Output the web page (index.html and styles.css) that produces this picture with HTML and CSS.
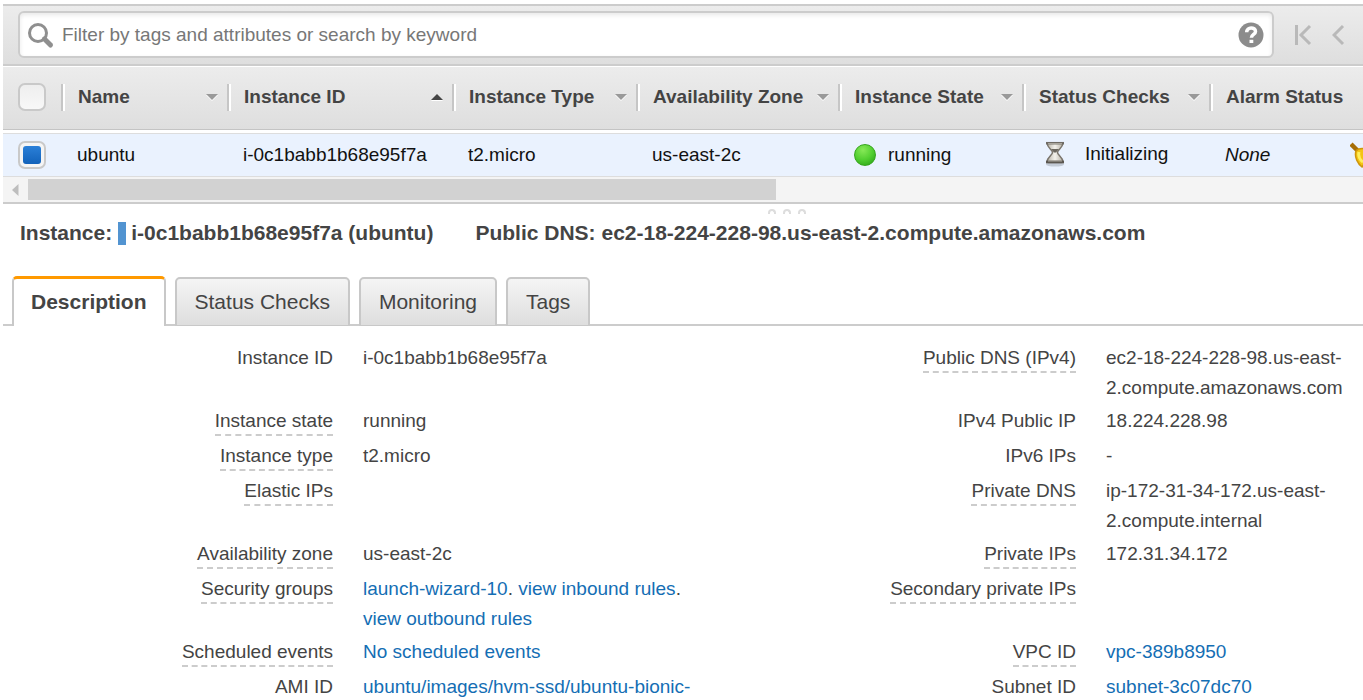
FILE: index.html
```html
<!DOCTYPE html>
<html lang="en">
<head>
<meta charset="utf-8">
<title>Instances</title>
<link rel="stylesheet" href="styles.css">
</head>
<body>
<main class="console">
  <div class="toolbar">
    <label class="search">
      <svg class="search-icon" width="28" height="28" viewBox="0 0 28 28" aria-hidden="true">
        <circle cx="10" cy="12" r="8.500" fill="none" stroke="#8f8f8f" stroke-width="3"/>
        <path d="M16.500 18L22.500 24" stroke="#8f8f8f" stroke-width="5" stroke-linecap="round"/>
      </svg>
      <input class="search-input" type="text" placeholder="Filter by tags and attributes or search by keyword" aria-label="Filter">
      <button class="icon-button" type="button" aria-label="Help">
        <svg width="26" height="26" viewBox="0 0 26 26" aria-hidden="true">
          <circle cx="13" cy="13" r="12.500" fill="#8c8c8c"/>
          <path d="M8.700 10.300C8.700 4.500 17.500 4.700 17.500 9.500C17.500 12.500 13.400 12.400 13.400 15.800" fill="none" stroke="#fff" stroke-width="3.500"/>
          <rect x="11.500" y="17.800" width="3.800" height="3.200" fill="#fff"/>
        </svg>
      </button>
    </label>
    <div class="pager">
      <button class="icon-button" type="button" aria-label="First page">
        <svg width="18" height="22" viewBox="0 0 18 22" aria-hidden="true"><path d="M2.500 1V21M16 2L7 11L16 20" fill="none" stroke="#b9b9b9" stroke-width="3"/></svg>
      </button>
      <button class="icon-button" type="button" aria-label="Previous page">
        <svg width="13" height="22" viewBox="0 0 13 22" aria-hidden="true"><path d="M11 2L2 11L11 20" fill="none" stroke="#b9b9b9" stroke-width="3"/></svg>
      </button>
    </div>
  </div>

  <table class="grid">
    <colgroup>
      <col class="col-check"><col class="col-name"><col class="col-id"><col class="col-type"><col class="col-zone"><col class="col-state"><col class="col-status"><col>
    </colgroup>
    <thead>
      <tr>
        <th class="check-cell"><input class="check" type="checkbox" aria-label="Select all instances"></th>
        <th><div class="head">Name<i class="arrow"></i></div></th>
        <th><div class="head">Instance ID<i class="arrow arrow-up"></i></div></th>
        <th><div class="head">Instance Type<i class="arrow"></i></div></th>
        <th><div class="head">Availability Zone<i class="arrow"></i></div></th>
        <th><div class="head">Instance State<i class="arrow"></i></div></th>
        <th><div class="head">Status Checks<i class="arrow"></i></div></th>
        <th><div class="head">Alarm Status</div></th>
      </tr>
    </thead>
    <tbody>
      <tr>
        <td class="check-cell"><input class="check" type="checkbox" checked aria-label="Select ubuntu"></td>
        <td>ubuntu</td>
        <td>i-0c1babb1b68e95f7a</td>
        <td>t2.micro</td>
        <td>us-east-2c</td>
        <td><div class="state"><span class="dot"></span>running</div></td>
        <td>
          <div class="status">
            <svg width="22" height="26" viewBox="0 0 22 26" aria-hidden="true">
              <defs>
                <linearGradient id="glass" x1="0" x2="1" y1="0" y2="0">
                  <stop offset="0" stop-color="#b5b0a5"/><stop offset=".5" stop-color="#f4f2ec"/><stop offset="1" stop-color="#b5b0a5"/>
                </linearGradient>
              </defs>
              <ellipse cx="11" cy="23.500" rx="9" ry="2" fill="#c3cbd6"/>
              <path d="M3 2H19C18.500 7.500 13.500 8.500 13.500 11.500C13.500 14 18.500 15.500 19 21H3C3.500 15.500 8.500 14 8.500 11.500C8.500 8.500 3.500 7.500 3 2Z" fill="url(#glass)" stroke="#7a756c" stroke-width="1.500"/>
              <path d="M7 8H15L12 11.500H10Z" fill="#6b675f"/>
              <path d="M2 2.200H20" stroke="#6f6b64" stroke-width="2.500"/>
              <path d="M2 21H20" stroke="#5b5750" stroke-width="2.800"/>
              <path d="M4 2.500H18M4 20H18" stroke="#a9a59c" stroke-width="1"/>
            </svg>
            Initializing
          </div>
        </td>
        <td>
          <div class="alarm">
            <em>None</em>
            <svg class="bell" width="26" height="26" viewBox="0 0 26 26" aria-hidden="true">
              <path d="M1 2L8 9" stroke="#a66e08" stroke-width="4.500"/>
              <path d="M6 9C9 5 17 6 23 10L12 25C8 22 4 15 6 9Z" fill="#f3c413" stroke="#cf960c" stroke-width="1.500"/>
              <path d="M9 10C8 14 10 18 13 20" fill="none" stroke="#ffef5c" stroke-width="3"/>
            </svg>
          </div>
        </td>
      </tr>
    </tbody>
  </table>

  <div class="scrollbar">
    <svg width="7" height="12" viewBox="0 0 7 12" aria-hidden="true"><path d="M6.500 0V12L0 6Z" fill="#bdbdbd"/></svg>
    <div class="track"><div class="thumb"></div></div>
  </div>

  <div class="splitter"><i></i><i></i><i></i></div>

  <h1 class="title">
    <span class="title-part">Instance:<i class="marker"></i>i-0c1babb1b68e95f7a (ubuntu)</span>
    <span>Public DNS: ec2-18-224-228-98.us-east-2.compute.amazonaws.com</span>
  </h1>

  <div class="tabs" role="tablist">
    <button class="tab tab-active" type="button" role="tab" aria-selected="true">Description</button>
    <button class="tab" type="button" role="tab" aria-selected="false">Status Checks</button>
    <button class="tab" type="button" role="tab" aria-selected="false">Monitoring</button>
    <button class="tab" type="button" role="tab" aria-selected="false">Tags</button>
  </div>

  <dl class="details">
    <dt>Instance ID</dt><dd>i-0c1babb1b68e95f7a</dd>
    <dt><span class="hint">Public DNS (IPv4)</span></dt><dd>ec2-18-224-228-98.us-east-2.compute.amazonaws.com</dd>

    <dt><span class="hint">Instance state</span></dt><dd>running</dd>
    <dt>IPv4 Public IP</dt><dd>18.224.228.98</dd>

    <dt><span class="hint">Instance type</span></dt><dd>t2.micro</dd>
    <dt>IPv6 IPs</dt><dd>-</dd>

    <dt><span class="hint">Elastic IPs</span></dt><dd></dd>
    <dt><span class="hint">Private DNS</span></dt><dd>ip-172-31-34-172.us-east-2.compute.internal</dd>

    <dt><span class="hint">Availability zone</span></dt><dd>us-east-2c</dd>
    <dt><span class="hint">Private IPs</span></dt><dd>172.31.34.172</dd>

    <dt><span class="hint">Security groups</span></dt><dd><a href="#">launch-wizard-10</a>. <a href="#">view inbound rules</a>. <a class="keep" href="#">view outbound rules</a></dd>
    <dt><span class="hint">Secondary private IPs</span></dt><dd></dd>

    <dt><span class="hint">Scheduled events</span></dt><dd><a href="#">No scheduled events</a></dd>
    <dt><span class="hint">VPC ID</span></dt><dd><a href="#">vpc-389b8950</a></dd>

    <dt>AMI ID</dt><dd><a href="#">ubuntu/images/hvm-ssd/ubuntu-bionic-</a></dd>
    <dt>Subnet ID</dt><dd><a href="#">subnet-3c07dc70</a></dd>
  </dl>
</main>
</body>
</html>
```
FILE: styles.css
```css
* { box-sizing: border-box; }

body {
  margin: 0;
  background: #fff;
  color: #444;
  font-family: "Liberation Sans", Arial, sans-serif;
  font-size: 19px;
}

.console {
  height: 100vh;
  padding: 4px 0 0 3px;
  overflow: hidden;
}

.icon-button {
  display: flex;
  padding: 0;
  border: 0;
  background: none;
}

/* Search bar */
.toolbar {
  display: flex;
  align-items: center;
  gap: 20px;
  padding: 5px 18px 6px 15px;
  border-top: 2px solid #ccc;
  border-bottom: 2px solid #ccc;
  background: linear-gradient(#ececec, #dedede);
}

.search {
  display: flex;
  flex: 1;
  align-items: center;
  gap: 6px;
  height: 47px;
  padding: 0 8px;
  border: 2px solid #ccc;
  border-radius: 6px;
  background: #fff;
  box-shadow: inset 0 2px 4px #e8e8e8;
}

.search-icon { flex: none; }

.search-input {
  flex: 1;
  min-width: 0;
  padding: 0;
  border: 0;
  outline: 0;
  background: none;
  font: inherit;
}

.search-input::placeholder { color: #777; }

.pager {
  display: flex;
  gap: 20px;
}

/* Instance table */
.grid {
  width: 100%;
  table-layout: fixed;
  border-spacing: 0;
  border-top: 1px solid #fff;
}

.col-check { width: 58px; }
.col-name { width: 166px; }
.col-id { width: 225px; }
.col-type { width: 184px; }
.col-zone { width: 202px; }
.col-state { width: 184px; }
.col-status { width: 187px; }

.grid thead { background: linear-gradient(#ececec, #dedede); }

.grid th {
  height: 63px;
  padding: 0 0 2px;
  border-bottom: 1px solid #c4c4c4;
  text-align: left;
  white-space: nowrap;
}

.head {
  display: flex;
  align-items: center;
  justify-content: space-between;
  height: 27px;
  padding: 0 9px 0 15px;
  border-left: 2px solid #c6c6c6;
  box-shadow: inset 2px 0 #fff;
}

.arrow {
  border: 6px solid transparent;
  border-top-color: #999;
  border-bottom: 0;
  filter: drop-shadow(0 1px #fff);
}

.arrow-up {
  border-top: 0;
  border-bottom: 6px solid #444;
}

.grid td {
  height: 47px;
  padding: 3px 0 0 16px;
  border-bottom: 1px solid #ddd;
  background: linear-gradient(#fff 3px, #ddd 3px, #ddd 4px, #eaf2fe 4px);
  color: #111;
  white-space: nowrap;
}

.grid .check-cell { padding-left: 15px; }

.check {
  display: block;
  width: 28px;
  height: 28px;
  margin: 0;
  appearance: none;
  border: 2px solid #c9c9c9;
  border-radius: 7px;
  background: linear-gradient(#eee, #f8f8f8);
}

.check:checked {
  padding: 3px;
  background: #f5f5f5;
}

.check:checked::before {
  display: block;
  width: 18px;
  height: 18px;
  border-radius: 3px;
  background: linear-gradient(#2b80d8, #1262ba);
  content: "";
}

.state {
  display: flex;
  align-items: center;
  gap: 12px;
}

.dot {
  width: 22px;
  height: 22px;
  border: 1px solid #35a51c;
  border-radius: 50%;
  background: radial-gradient(circle at 40% 25%, #87e957, #52cf31 50%, #249b12);
}

.status {
  display: flex;
  align-items: center;
  gap: 19px;
  padding: 0 0 2px 6px;
}

.alarm {
  display: flex;
  align-items: center;
  gap: 80px;
  overflow: hidden;
}

.bell { flex: none; }

.scrollbar {
  display: flex;
  align-items: center;
  gap: 9px;
  padding: 2px 0 2px 9px;
  border-bottom: 2px solid #ccc;
  background: #f4f4f4;
}

.track { flex: 1; }

.thumb {
  width: 56%;
  height: 21px;
  background: #d2d2d2;
}

.splitter {
  display: flex;
  justify-content: center;
  gap: 7px;
  padding: 5px 0 5px 208px;
}

.splitter i {
  width: 8px;
  height: 5px;
  border: 2px solid #ddd;
  border-bottom: 0;
  border-radius: 4px 4px 0 0;
}

/* Detail pane */
.title {
  display: flex;
  gap: 42px;
  margin: 0;
  padding: 0 17px;
  font-size: 21px;
  line-height: 28px;
  white-space: nowrap;
}

.title-part {
  display: flex;
  align-items: center;
}

.marker {
  width: 8px;
  height: 23px;
  margin: 0 5px 0 6px;
  background: #5294d1;
}

.tabs {
  display: flex;
  align-items: flex-end;
  gap: 9px;
  margin-top: 29px;
  padding-left: 9px;
  background: linear-gradient(#ccc, #ccc) bottom / 100% 2px no-repeat;
}

.tab {
  height: 49px;
  padding: 0 18px;
  border: 2px solid #c8c8c8;
  border-bottom-width: 1px;
  border-radius: 5px 5px 0 0;
  background: linear-gradient(#f5f5f5, #dedede);
  color: #444;
  font: inherit;
  font-size: 21px;
}

.tab-active {
  height: 50px;
  padding: 0 17px 2px;
  border-top: 3px solid #f90;
  border-bottom: 0;
  background: #fff;
  font-weight: bold;
}

.details {
  display: grid;
  grid-template-columns: 330fr 353fr 330fr 257fr;
  column-gap: 30px;
  margin: 17px 0 0;
  line-height: 30px;
}

.details dt {
  min-height: 35px;
  text-align: right;
}

.details dd {
  margin: 0;
  padding-bottom: 3px;
}

.hint {
  padding-bottom: 3px;
  border-bottom: 2px dashed #ccc;
}

.details a {
  color: #146eb4;
  text-decoration: none;
}

.keep { white-space: nowrap; }
```
